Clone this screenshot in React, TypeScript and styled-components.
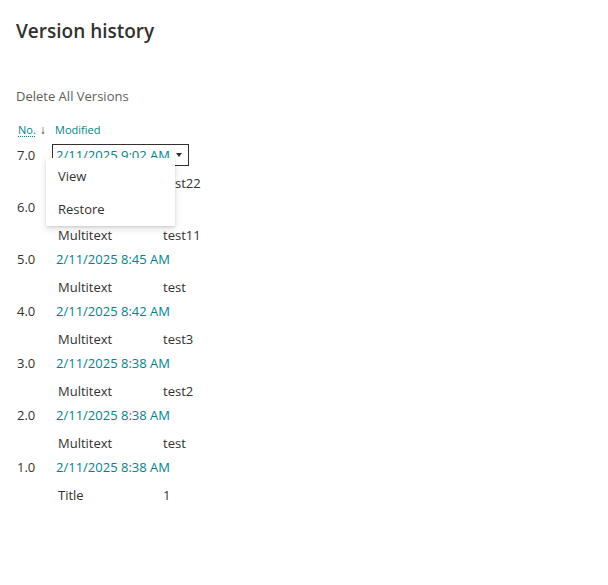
import React from "react";
import styled, { createGlobalStyle } from "styled-components";

const Global = createGlobalStyle`
  html, body { margin: 0; padding: 0; background: #fff; }
  body { font-family: "Open Sans", "Noto Sans", sans-serif; color: #323130; }
`;

const Page = styled.div`
  padding: 16px 16px 0 16px;
  display: flex;
  flex-direction: column;
`;

const Title = styled.h1`
  margin: 0;
  font-size: 19px;
  font-weight: 600;
  line-height: 30px;
  color: #323130;
`;

const DeleteAll = styled.div`
  margin-top: 40px;
  font-size: 13px;
  line-height: 20px;
  color: #605e5c;
`;

const HeaderRow = styled.div`
  margin-top: 13px;
  display: flex;
  align-items: center;
  height: 20px;
  font-size: 11px;
  color: #038387;
`;

const NoHeader = styled.div`
  width: 39px;
  padding-left: 2px;
  display: flex;
  align-items: center;
  gap: 4px;
  box-sizing: border-box;
`;

const Dotted = styled.span`
  text-decoration: underline dotted;
  text-underline-offset: 2px;
`;

const Arrow = styled.span`
  color: #323130;
  font-size: 12px;
  font-weight: 600;
`;

const List = styled.div`
  margin-top: 3px;
  display: flex;
  flex-direction: column;
  position: relative;
`;

const VersionRow = styled.div`
  display: flex;
  align-items: center;
  height: 26px;
  font-size: 13px;
`;

const Num = styled.div`
  width: 39px;
  padding-left: 1px;
  color: #323130;
`;

const DateCell = styled.div<{ $open?: boolean }>`
  position: relative;
  display: flex;
  align-items: center;
  height: 22px;
  box-sizing: border-box;
  margin-left: ${(p) => (p.$open ? "-4px" : "0")};
  padding: ${(p) => (p.$open ? "0 6px 0 3px" : "0")};
  border: ${(p) => (p.$open ? "1px solid #323130" : "none")};
  width: ${(p) => (p.$open ? "137px" : "auto")};
  color: #038387;
`;

const Caret = styled.span`
  margin-left: auto;
  width: 0;
  height: 0;
  border-left: 3px solid transparent;
  border-right: 3px solid transparent;
  border-top: 4px solid #323130;
`;

const DetailRow = styled.div`
  display: flex;
  align-items: center;
  height: 26px;
  padding-top: 4px;
  box-sizing: border-box;
  font-size: 13px;
  color: #323130;
`;

const Field = styled.div`
  width: 105px;
  padding-left: 42px;
`;

const Value = styled.div``;

const Menu = styled.div`
  position: absolute;
  left: 30px;
  top: 16px;
  width: 129px;
  padding: 1px 0;
  background: #fff;
  box-shadow: 0 3.2px 7.2px rgba(0, 0, 0, 0.13), 0 0.6px 1.8px rgba(0, 0, 0, 0.11);
  display: flex;
  flex-direction: column;
  z-index: 2;
`;

const MenuItem = styled.div`
  height: 33px;
  padding: 0 0 0 12px;
  box-sizing: border-box;
  display: flex;
  align-items: center;
  font-size: 13px;
  color: #323130;
`;

const versions = [
  { n: "7.0", d: "2/11/2025 9:02 AM", f: "Multitext", v: "test22" },
  { n: "6.0", d: "2/11/2025 8:47 AM", f: "Multitext", v: "test11" },
  { n: "5.0", d: "2/11/2025 8:45 AM", f: "Multitext", v: "test" },
  { n: "4.0", d: "2/11/2025 8:42 AM", f: "Multitext", v: "test3" },
  { n: "3.0", d: "2/11/2025 8:38 AM", f: "Multitext", v: "test2" },
  { n: "2.0", d: "2/11/2025 8:38 AM", f: "Multitext", v: "test" },
  { n: "1.0", d: "2/11/2025 8:38 AM", f: "Title", v: "1" },
];

export default function App() {
  return (
    <>
      <Global />
      <Page>
        <Title>Version history</Title>
        <DeleteAll>Delete All Versions</DeleteAll>
        <HeaderRow>
          <NoHeader>
            <Dotted>No.</Dotted>
            <Arrow>↓</Arrow>
          </NoHeader>
          <span>Modified</span>
        </HeaderRow>
        <List>
          {versions.map((r, i) => (
            <React.Fragment key={r.n}>
              <VersionRow>
                <Num>{r.n}</Num>
                <DateCell $open={i === 0}>
                  {r.d}
                  {i === 0 && <Caret />}
                </DateCell>
              </VersionRow>
              <DetailRow>
                <Field>{r.f}</Field>
                <Value>{r.v}</Value>
              </DetailRow>
            </React.Fragment>
          ))}
          <Menu>
            <MenuItem>View</MenuItem>
            <MenuItem>Restore</MenuItem>
          </Menu>
        </List>
      </Page>
    </>
  );
}
